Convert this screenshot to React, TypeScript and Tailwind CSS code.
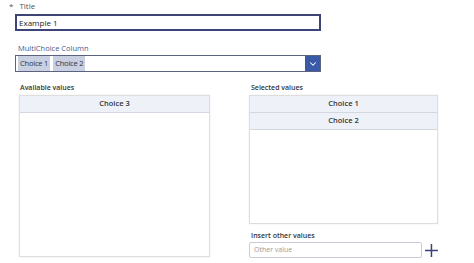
import { ChevronDown } from 'lucide-react'

function ListBox({ items, className }: { items: string[]; className: string }) {
  return (
    <div className={`border border-[#dedede] bg-white shadow-[0_0_2px_rgba(0,0,0,0.08)] ${className}`}>
      {items.map((item) => (
        <div
          key={item}
          className="flex h-[17px] items-center justify-center border-b border-[#d3d8e0] bg-[#eef2f8] text-[7.5px] font-semibold text-[#333]"
        >
          {item}
        </div>
      ))}
    </div>
  )
}

export default function App() {
  return (
    <div className="h-[263px] w-[474px] bg-white font-['Open_Sans',sans-serif] text-[#333]">
      <div className="flex h-[13px] items-start pl-[9px] pt-[1px] text-[8px] leading-[10px] text-[#555]">
        <span className="mr-[6px]">*</span>
        <span>Title</span>
      </div>

      <div className="ml-[15px] mt-[1px] flex h-[17px] w-[306px] items-center border-2 border-[#3f4476] px-[2px] text-[8px] text-[#222]">
        Example 1
      </div>

      <div className="ml-[18px] mt-[11px] h-[13px] text-[7.5px] leading-[13px] text-[#4d5a86]">MultiChoice Column</div>

      <div className="ml-[15px] flex h-[17px] w-[306px] items-stretch border border-[#5c6180]">
        <div className="flex flex-1 items-center gap-[3px] pl-[2px]">
          <span className="flex h-[15px] items-center bg-[#c8d0e2] px-[2px] text-[7.5px] tracking-[-0.2px] text-[#2f3445]">Choice 1</span>
          <span className="flex h-[15px] items-center bg-[#c8d0e2] px-[2px] text-[7.5px] tracking-[-0.2px] text-[#2f3445]">Choice 2</span>
        </div>
        <div className="flex w-[15px] items-center justify-center bg-[#3a5aa8]">
          <ChevronDown className="h-[10px] w-[10px] text-white" strokeWidth={2.5} />
        </div>
      </div>

      <div className="mt-[11px] flex">
        <div className="ml-[19px] w-[191px]">
          <div className="h-[12px] pl-[1px] text-[7px] leading-[10px] font-semibold text-[#333]">Available values</div>
          <ListBox items={['Choice 3']} className="h-[162px]" />
        </div>

        <div className="ml-[39px] w-[189px]">
          <div className="h-[12px] pl-[2px] text-[7px] leading-[10px] font-semibold text-[#333]">Selected values</div>
          <ListBox items={['Choice 1', 'Choice 2']} className="h-[129px]" />
          <div className="mt-[7px] h-[11px] pl-[2px] text-[7px] leading-[10px] font-semibold text-[#333]">Insert other values</div>
          <div className="flex items-center">
            <div className="flex h-[16px] w-[174px] items-center rounded-[2px] border border-[#c8ccd8] px-[4px] text-[7px] text-[#9a9a9a]">
              Other value
            </div>
            <svg viewBox="0 0 12 12" className="ml-[3px] h-[13px] w-[13px]" fill="none" stroke="#3b4275" strokeWidth="1.4">
              <path d="M6 0v12M0 6h12" />
            </svg>
          </div>
        </div>
      </div>
    </div>
  )
}
